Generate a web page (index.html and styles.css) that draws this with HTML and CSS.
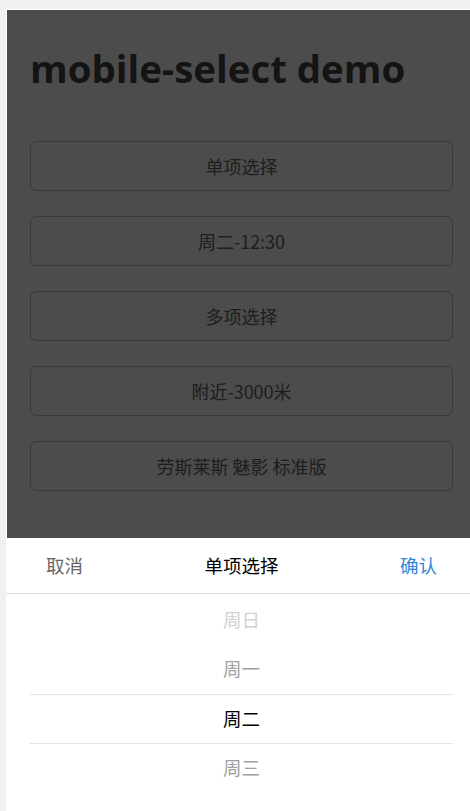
FILE: index.html
```html
<!DOCTYPE html>
<html lang="zh-CN">
<head>
<meta charset="utf-8">
<title>mobile-select demo</title>
<link rel="stylesheet" href="styles.css">
</head>
<body>
<div class="frame">
  <div class="page">
    <h1 class="title">mobile-select demo</h1>
    <div class="buttons">
      <div class="btn">单项选择</div>
      <div class="btn">周二-12:30</div>
      <div class="btn">多项选择</div>
      <div class="btn">附近-3000米</div>
      <div class="btn">劳斯莱斯 魅影 标准版</div>
    </div>
  </div>
  <div class="mask"></div>
  <div class="sheet">
    <div class="sheet-head">
      <span class="cancel">取消</span>
      <span class="sheet-title">单项选择</span>
      <span class="ok">确认</span>
    </div>
    <div class="wheel">
      <div class="item far">周日</div>
      <div class="item near">周一</div>
      <div class="item selected">周二</div>
      <div class="item near">周三</div>
      <div class="item far"></div>
    </div>
  </div>
</div>
</body>
</html>
```

FILE: styles.css
```css
html, body {
  margin: 0;
  padding: 0;
  background: #f0f1f0;
  font-family: "Noto Sans CJK SC", "Open Sans", sans-serif;
}

.frame {
  position: relative;
  margin: 9px 0 0 6px;
  height: 802px;
  background: #fff;
  overflow: hidden;
}

.page {
  padding: 0 17px 0 24px;
}

.title {
  margin: 0;
  padding-top: 36px;
  font-family: "Open Sans", sans-serif;
  font-weight: 700;
  font-size: 38.4px;
  line-height: 46px;
  color: #444;
}

.buttons {
  display: flex;
  flex-direction: column;
  gap: 25px;
  margin-top: 50px;
}

.btn {
  box-sizing: border-box;
  height: 50px;
  padding-bottom: 1px;
  border: 1px solid #bfbfbf;
  border-radius: 6px;
  display: flex;
  align-items: center;
  justify-content: center;
  font-size: 18px;
  color: #666;
}

.mask {
  position: absolute;
  top: 1px;
  left: 1px;
  right: 0;
  bottom: 0;
  background: rgba(0, 0, 0, 0.7);
}

.sheet {
  position: absolute;
  left: 0;
  right: 0;
  bottom: 0;
  height: 273px;
  background: #fff;
}

.sheet-head {
  box-sizing: border-box;
  height: 56px;
  border-bottom: 1px solid #dcdcdc;
  display: flex;
  align-items: center;
  justify-content: space-between;
  padding: 0 33px 2px 40px;
  font-size: 18.5px;
}

.cancel { color: #666; }
.sheet-title { color: #000; }
.ok { color: #2f86d8; }

.wheel {
  margin: 2px 17px 0 24px;
  display: flex;
  flex-direction: column;
}

.item {
  box-sizing: border-box;
  height: 49px;
  padding-bottom: 3px;
  display: flex;
  align-items: center;
  justify-content: center;
  font-size: 18.5px;
  color: #a0a0a0;
}

.item.far { color: #d2d2d2; }
.item.near { color: #a0a0a0; }
.item.selected {
  color: #000;
  border-top: 1px solid #e3e3e3;
  border-bottom: 1px solid #e3e3e3;
  height: 50px;
}
```
